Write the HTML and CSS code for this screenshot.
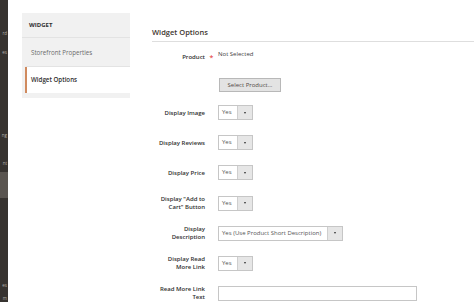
FILE: index.html
```html
<!DOCTYPE html>
<html lang="en">
<head>
<meta charset="utf-8">
<title>Widget Options</title>
<link rel="stylesheet" href="styles.css">
</head>
<body>
<div class="app">
  <nav class="menu">
    <div class="menu-item m1">rd</div>
    <div class="menu-item m2">es</div>
    <div class="menu-item m3">ng</div>
    <div class="menu-item m4">nt</div>
    <div class="menu-active"></div>
    <div class="menu-item m5">es</div>
    <div class="menu-item m6">m</div>
  </nav>
  <div class="page">
    <aside class="tabs">
      <div class="tabs-title">WIDGET</div>
      <div class="tab">Storefront Properties</div>
      <div class="tab active">Widget Options</div>
    </aside>
    <main class="main">
      <h2 class="section-title">Widget Options</h2>
      <div class="field field-product">
        <label class="label">Product</label>
        <span class="req">*</span>
        <div class="static">Not Selected</div>
      </div>
      <div class="button-row"><button class="btn" type="button">Select Product...</button></div>
      <div class="field first">
        <label class="label">Display Image</label><span></span>
        <div class="select"><span class="value">Yes</span><span class="arrow"></span></div>
      </div>
      <div class="field">
        <label class="label">Display Reviews</label><span></span>
        <div class="select"><span class="value">Yes</span><span class="arrow"></span></div>
      </div>
      <div class="field">
        <label class="label">Display Price</label><span></span>
        <div class="select"><span class="value">Yes</span><span class="arrow"></span></div>
      </div>
      <div class="field">
        <label class="label">Display "Add to Cart" Button</label><span></span>
        <div class="select"><span class="value">Yes</span><span class="arrow"></span></div>
      </div>
      <div class="field">
        <label class="label">Display Description</label><span></span>
        <div class="select wide"><span class="value">Yes (Use Product Short Description)</span><span class="arrow"></span></div>
      </div>
      <div class="field">
        <label class="label">Display Read More Link</label><span></span>
        <div class="select"><span class="value">Yes</span><span class="arrow"></span></div>
      </div>
      <div class="field">
        <label class="label">Read More Link Text</label><span></span>
        <div class="input"></div>
      </div>
    </main>
  </div>
</div>
</body>
</html>
```

FILE: styles.css
```css
html, body {
  margin: 0;
  padding: 0;
  background: #ffffff;
}
body {
  font-family: "Open Sans", "Noto Sans", sans-serif;
  width: 474px;
  height: 302px;
  overflow: hidden;
}
.app {
  display: flex;
  height: 302px;
}
.menu {
  width: 8px;
  flex-shrink: 0;
  background: #373330;
  display: flex;
  flex-direction: column;
  overflow: hidden;
}
.menu-item {
  height: 8px;
  display: flex;
  justify-content: flex-end;
  padding-right: 1px;
  font-size: 4.5px;
  line-height: 8px;
  color: #b5afa8;
  white-space: nowrap;
}
.m1 { margin-top: 29px; }
.m2 { margin-top: 11px; }
.m3 { margin-top: 75px; }
.m4 { margin-top: 20px; }
.menu-active {
  height: 26px;
  margin-top: 5px;
  background: #5a5550;
}
.m5 { margin-top: 83px; }
.m6 { margin-top: 5px; }

.page {
  flex: 1;
  display: flex;
  gap: 22px;
  padding-left: 14px;
  min-width: 0;
}
.tabs {
  width: 108px;
  flex-shrink: 0;
  align-self: flex-start;
  margin-top: 13px;
  background: #f1f1f1;
  padding-bottom: 5px;
}
.tabs-title {
  height: 24px;
  line-height: 24px;
  padding-left: 7px;
  font-size: 6px;
  font-weight: 700;
  color: #303030;
  border-bottom: 1px solid #e3e3e3;
}
.tab {
  height: 28px;
  line-height: 30px;
  margin-left: 3px;
  border-left: 2px solid transparent;
  padding-left: 4px;
  font-size: 6.2px;
  color: #6a6a6a;
  border-bottom: 1px solid #e3e3e3;
}
.tab.active {
  height: 26px;
  line-height: 26px;
  border-bottom: none;
  border-left-color: #d08a5e;
  background: #ffffff;
  color: #303030;
  font-weight: 600;
}

.main {
  flex: 1;
  min-width: 0;
}
.section-title {
  margin: 26px 0 0;
  font-size: 7.5px;
  line-height: 12px;
  font-weight: 600;
  color: #41362f;
  padding-bottom: 3px;
  border-bottom: 1px solid #dedede;
}
.field {
  display: grid;
  grid-template-columns: 53px 13px auto;
  align-items: center;
  height: 15px;
  margin-top: 15px;
}
.field.first {
  margin-top: 13px;
}
.label {
  text-align: right;
  font-size: 6px;
  line-height: 8px;
  font-weight: 600;
  color: #303030;
}
.field-product {
  align-items: start;
  height: auto;
  margin-top: 8px;
}
.field-product .label {
  padding-top: 3px;
}
.req {
  padding-top: 3px;
  text-align: center;
  font-size: 7px;
  line-height: 9px;
  color: #e22626;
}
.static {
  font-size: 6px;
  line-height: 8px;
  color: #404040;
}
.button-row {
  margin-top: 16px;
  padding-left: 67px;
  display: flex;
}
.btn {
  height: 14px;
  width: 62px;
  padding: 0;
  font-family: inherit;
  font-size: 6px;
  color: #514943;
  background: #e3e3e3;
  border: 1px solid #b8b8b8;
  border-radius: 0;
}
.select {
  display: flex;
  width: 35px;
  height: 15px;
  box-sizing: border-box;
  border: 1px solid #c6c6c6;
  background: #ffffff;
}
.select.wide {
  width: 125px;
}
.value {
  flex: 1;
  padding-left: 3px;
  font-size: 6px;
  line-height: 13px;
  color: #555555;
  white-space: nowrap;
  overflow: hidden;
}
.arrow {
  width: 14px;
  flex-shrink: 0;
  background: #e6e6e6;
  border-left: 1px solid #cfcfcf;
  display: flex;
  align-items: center;
  justify-content: center;
}
.arrow::after {
  content: "";
  border-left: 1.5px solid transparent;
  border-right: 1.5px solid transparent;
  border-top: 2px solid #303030;
}
.input {
  width: 199px;
  height: 15px;
  box-sizing: border-box;
  border: 1px solid #c6c6c6;
  background: #ffffff;
}
```
